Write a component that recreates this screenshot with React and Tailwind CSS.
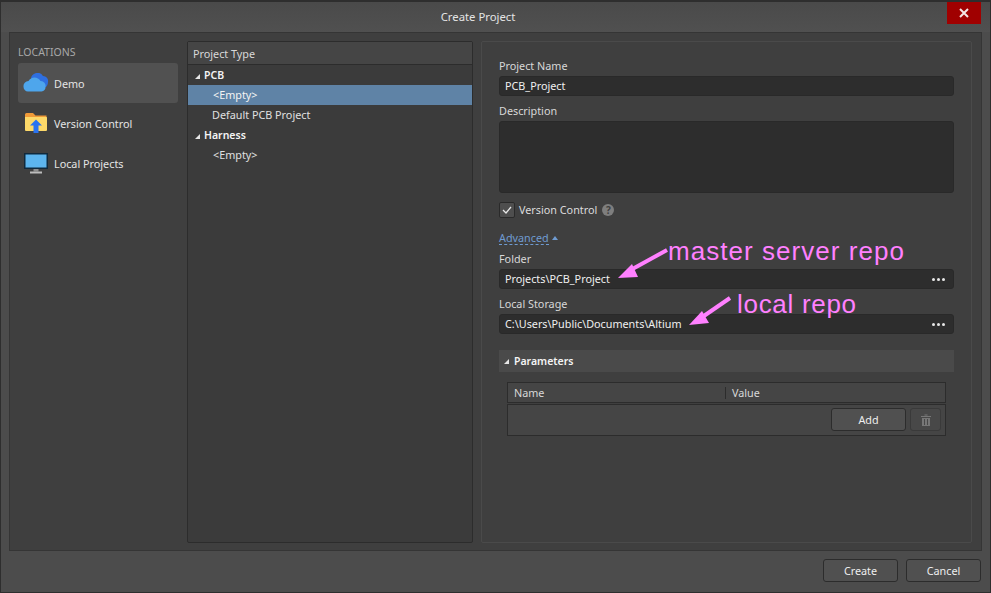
// App.jsx
import React from "react";

const font = { fontFamily: '"Noto Sans", "Open Sans", sans-serif' };

function CloudIcon() {
  return (
    <svg width="26" height="20" viewBox="0 0 26 20">
      <path d="M8 7a6.500 6.500 0 0 1 12-4 5 5 0 0 1 5 6c0 2-1 4-2 5H12z" fill="#2f6fe0" />
      <path d="M0.500 13.500A5 5 0 0 1 5.500 8a7 7 0 0 1 12 0 4.800 4.800 0 0 1 5 5.800 4.200 4.200 0 0 1-4 4.700H5A4.800 4.800 0 0 1 0.500 13.500z" fill="#4ea6ec" />
    </svg>
  );
}

function FolderIcon() {
  return (
    <svg width="24" height="22" viewBox="0 0 24 22">
      <path d="M1 2.500A1.500 1.500 0 0 1 2.500 1H9l2.500 2.500H22.500V7H1z" fill="#f09a38" />
      <path d="M1 5h21.500a.5.5 0 0 1 .5.5V18a1 1 0 0 1-1 1H2a1 1 0 0 1-1-1z" fill="#fdd969" />
      <path d="M12 7.500l6 6h-3.500V21h-5v-7.500H6z" fill="#2a73f0" />
    </svg>
  );
}

function MonitorIcon() {
  return (
    <svg width="26" height="21" viewBox="0 0 26 21">
      <rect x="1" y="0" width="24" height="16" fill="#10293c" />
      <rect x="2.500" y="1.500" width="21" height="13" fill="#5db5ee" />
      <rect x="10.500" y="16" width="5" height="2.500" fill="#8f8f8f" />
      <rect x="7" y="18.500" width="12" height="2" fill="#bdbdbd" />
    </svg>
  );
}

function Caret() {
  return (
    <svg width="5" height="5" viewBox="0 0 5 5" className="shrink-0">
      <path d="M5 0v5H0z" fill="#e6e6e6" />
    </svg>
  );
}

function FieldLabel({ children }) {
  return <div className="h-[14px] leading-[14px] text-[#d8d8d8]">{children}</div>;
}

function Field({ value, dots }) {
  return (
    <div className="h-5 mt-[3px] rounded-[3px] bg-[#2d2d2d] border border-[#292929] flex items-center justify-between px-[5px] text-[#f0f0f0]">
      <span className="pt-[1px]">{value}</span>
      {dots && (
        <span className="flex gap-[2px] mr-[3px]">
          <i className="w-[3px] h-[3px] rounded-full bg-[#e8e8e8]" />
          <i className="w-[3px] h-[3px] rounded-full bg-[#e8e8e8]" />
          <i className="w-[3px] h-[3px] rounded-full bg-[#e8e8e8]" />
        </span>
      )}
    </div>
  );
}

const locations = [
  { name: "Demo", icon: <CloudIcon />, active: true },
  { name: "Version Control", icon: <FolderIcon /> },
  { name: "Local Projects", icon: <MonitorIcon /> },
];

export default function App() {
  return (
    <div
      style={font}
      className="relative w-[991px] h-[593px] overflow-hidden bg-[#4c4c4c] border-t-2 border-x border-b border-[#2e2e2e] text-[10.800px] text-[#e0e0e0] flex flex-col"
    >
      {/* TITLE */}
      <div className="h-[30px] shrink-0 flex items-start pl-2 pr-[9px] bg-gradient-to-b from-[#4a4a4a] to-[#505050]">
        <div className="flex-1 text-center text-[11.300px] leading-[29px] text-[#e4e4e4]">Create Project</div>
        <div className="w-[34px] h-[22px] bg-[#a00000] flex items-center justify-center">
          <svg width="10" height="10" viewBox="0 0 10 10">
            <path d="M1 1l8 8M9 1l-8 8" stroke="#f4e4e4" strokeWidth="2" />
          </svg>
        </div>
      </div>

      {/* MAIN */}
      <div className="h-[519px] shrink-0 mx-2 border border-[#353535] bg-[#3f3f3f] flex pl-2 pr-[9px] pt-2 pb-[7px]">
        {/* LOCATIONS */}
        <div className="w-[160px] shrink-0">
          <div className="h-[22px] leading-[22px] text-[#a8a8a8] text-[10.500px]">LOCATIONS</div>
          {locations.map((l) => (
            <div
              key={l.name}
              className={`h-10 flex items-center rounded-[3px] ${l.active ? "bg-[#515151]" : ""}`}
            >
              <div className="w-9 flex justify-center pr-[1px]">{l.icon}</div>
              <span className="text-[#e4e4e4] pt-[2px]">{l.name}</span>
            </div>
          ))}
        </div>

        {/* PROJECT TYPE */}
        <div className="w-[286px] shrink-0 ml-[9px] border border-[#2c2c2c] rounded-[2px] bg-[#3b3b3b]">
          <div className="h-[23px] leading-[24px] px-[5px] bg-[#454545] border-b border-[#2c2c2c] text-[#d8d8d8]">
            Project Type
          </div>
          <div className="h-5 flex items-center gap-[4px] pl-[7px] pt-[2px] font-semibold text-[10.500px] text-[#f4f4f4]"><Caret />PCB</div>
          <div className="h-5 flex items-center pl-[25px] bg-[#5f83a6] text-[#f4f4f4]">&lt;Empty&gt;</div>
          <div className="h-5 flex items-center pl-[24px] text-[#e0e0e0]">Default PCB Project</div>
          <div className="h-5 flex items-center gap-[4px] pl-[7px] pt-[2px] font-semibold text-[10.500px] text-[#f4f4f4]"><Caret />Harness</div>
          <div className="h-5 flex items-center pl-[25px] text-[#e0e0e0]">&lt;Empty&gt;</div>
        </div>

        {/* DETAILS */}
        <div className="flex-1 ml-2 border border-[#4a4a4a] rounded-[2px] pt-[17px] px-[17px]">
          <FieldLabel>Project Name</FieldLabel>
          <Field value="PCB_Project" />
          <div className="h-2" />
          <FieldLabel>Description</FieldLabel>
          <div className="h-[72px] mt-[3px] rounded-[3px] bg-[#2d2d2d] border border-[#292929]" />

          <div className="h-[18px] mt-2 flex items-center">
            <span className="w-4 h-4 rounded-[2px] bg-[#4e4e4e] border border-[#2a2a2a] flex items-center justify-center">
              <svg width="10" height="8" viewBox="0 0 10 8">
                <path d="M1 4l3 3 5-6" fill="none" stroke="#e8e8e8" strokeWidth="1.300" />
              </svg>
            </span>
            <span className="ml-1 text-[#dcdcdc]">Version Control</span>
            <span className="ml-[5px] w-3 h-3 rounded-full bg-[#7e7e7e] text-[#3f3f3f] font-bold text-[10px] leading-3 text-center">?</span>
          </div>

          <div className="h-[14px] mt-[12px] flex items-center text-[#6f9bd1]">
            <span className="leading-[13px] border-b border-dashed border-[#6f9bd1]">Advanced</span>
            <svg width="6" height="4" viewBox="0 0 6 4" className="ml-[3px]">
              <path d="M3 0l3 4H0z" fill="#6f9bd1" />
            </svg>
          </div>

          <div className="h-[7px]" />
          <FieldLabel>Folder</FieldLabel>
          <Field value="Projects\PCB_Project" dots />
          <div className="h-2" />
          <FieldLabel>Local Storage</FieldLabel>
          <Field value="C:\Users\Public\Documents\Altium" dots />

          {/* PARAMETERS */}
          <div className="h-[22px] mt-4 bg-[#4a4a4a] flex items-center gap-[5px] pl-[5px] pt-[1px] font-semibold text-[10.500px] text-[#f4f4f4]">
            <Caret />Parameters
          </div>
          <div className="mx-2 mt-[10px]">
            <div className="h-[21px] border border-[#2c2c2c] bg-[#454545] flex items-center leading-[12px] text-[#d8d8d8]">
              <div className="w-[218px] pl-[6px] border-r border-[#2c2c2c]">Name</div>
              <div className="pl-[6px]">Value</div>
            </div>
            <div className="h-[32px] mt-[1px] border border-[#2c2c2c] bg-[#454545] flex items-start justify-end gap-1 pt-[3px] pr-1">
              <div className="w-[75px] h-[23px] rounded-[3px] border border-[#2c2c2c] bg-[#505050] text-center leading-[21px] text-[#eeeeee]">Add</div>
              <div className="w-[31px] h-[23px] rounded-[3px] border border-[#3a3a3a] bg-[#484848] flex items-center justify-center">
                <svg width="10" height="12" viewBox="0 0 10 12">
                  <path d="M3.500 1.500V.5h3v1M0 2h10v1H0zM1 4h8v8H1z" fill="#777777" />
                  <path d="M3.500 5v6M6.500 5v6" stroke="#484848" />
                </svg>
              </div>
            </div>
          </div>
        </div>
      </div>

      {/* FOOTER */}
      <div className="flex-1 flex items-start justify-end gap-2 pt-2 pr-[9px]">
        <div className="w-[75px] h-[23px] rounded-[3px] border border-[#2c2c2c] bg-[#505050] text-center leading-[21px] text-[#eeeeee]">Create</div>
        <div className="w-[75px] h-[23px] rounded-[3px] border border-[#2c2c2c] bg-[#505050] text-center leading-[21px] text-[#eeeeee]">Cancel</div>
      </div>

      {/* ANNOTATIONS */}
      <span className="absolute left-[667px] top-[234px] text-[26px] leading-[30px] tracking-[1.050px] text-[#ff80ff] font-['Liberation_Sans',sans-serif]">
        master server repo
      </span>
      <span className="absolute left-[736px] top-[287px] text-[26px] leading-[30px] tracking-[0.700px] text-[#ff80ff] font-['Liberation_Sans',sans-serif]">
        local repo
      </span>
      <svg className="absolute left-0 top-[-2px] pointer-events-none" width="991" height="593" viewBox="0 0 991 593">
        <path d="M666 250L626 272" stroke="#ff80ff" strokeWidth="4" />
        <path d="M617 278l14-14 6 13z" fill="#ff80ff" />
        <path d="M729 298L697 320" stroke="#ff80ff" strokeWidth="4" />
        <path d="M688 325l13-14 7 12z" fill="#ff80ff" />
      </svg>
    </div>
  );
}
